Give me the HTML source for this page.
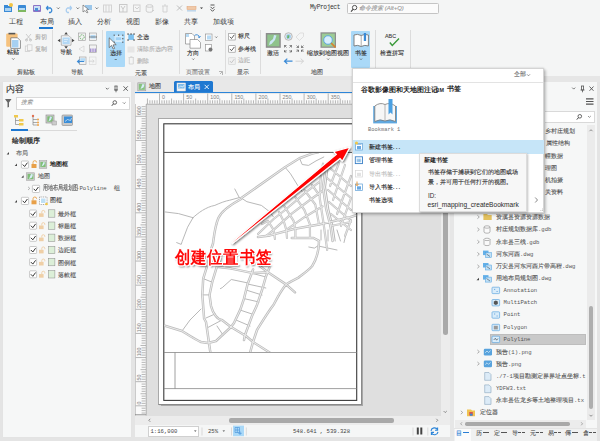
<!DOCTYPE html>
<html><head><meta charset="utf-8">
<style>
*{margin:0;padding:0;box-sizing:border-box}
html,body{width:600px;height:441px;overflow:hidden}
body{position:relative;background:#e4e4e4;font-family:"Liberation Sans",sans-serif;color:#333;font-size:7px;line-height:1}
.a{position:absolute}
.t{position:absolute;white-space:nowrap;line-height:1;-webkit-text-stroke:.12px currentColor}
.mono{font-family:"Liberation Mono",monospace;-webkit-text-stroke:0}
</style></head><body>
<div class="a" style="left:0;top:0;width:600px;height:76px;background:#f4f5f5"></div>
<div class="a" style="left:0;top:76px;width:600px;height:6px;background:#e6e6e6"></div>

<!-- ===== QAT ===== -->
<svg class="a" style="left:0;top:0" width="230" height="15" viewBox="0 0 230 15">
 <g>
  <rect x="4" y="6" width="8" height="6" fill="#3a8ad6"/><rect x="4" y="5" width="4" height="2" fill="#3a8ad6"/><rect x="5" y="8" width="6" height="3" fill="#a9d2f3"/><circle cx="11" cy="5" r="2" fill="#f2c444"/>
  <rect x="18" y="5" width="8" height="7" rx="1" fill="#3a8ad6"/><rect x="19" y="8" width="6" height="3" fill="#b6dbf5"/><rect x="18" y="10" width="8" height="2" fill="#7fb861"/>
  <rect x="33" y="5" width="8" height="7" rx="1" fill="#8d74c6"/><rect x="34" y="6" width="6" height="4" fill="#c9e0f5"/><rect x="35" y="8" width="3" height="3" fill="#4b8fd6"/>
  <path d="M48 6 L46.5 8 L48 10 M46.8 8 H50.5 A2.6 2.6 0 0 1 50.5 12.5 H49" fill="none" stroke="#3a8ad6" stroke-width="1.3"/>
  <path d="M57 7.5 L58.3 8.8 L59.6 7.5" fill="none" stroke="#555" stroke-width=".8"/>
  <path d="M70 6 L71.5 8 L70 10 M71.2 8 H67.5 A2.6 2.6 0 0 0 67.5 12.5 H69" fill="none" stroke="#a9cdef" stroke-width="1.3"/>
  <path d="M76.5 7.5 L77.8 8.8 L79.1 7.5" fill="none" stroke="#555" stroke-width=".8"/>
  <rect x="85" y="5" width="7" height="5" fill="#9cc7ea"/><path d="M83 5 L83 12 L85 10.5 L87 13 L88 12.3 L86.2 10 L88.5 9.5 Z" fill="#fff" stroke="#555" stroke-width=".6"/>
  <path d="M95.5 7.5 L96.8 8.8 L98.1 7.5" fill="none" stroke="#555" stroke-width=".8"/>
  <rect x="103.5" y="5" width="8" height="7" fill="none" stroke="#d3d3d3" stroke-width="1"/><path d="M106 5V12M109 5V12" stroke="#d3d3d3"/>
  <rect x="119.5" y="4.5" width="7.5" height="7.5" fill="none" stroke="#c9c9c9"/><path d="M121 6 L123 9 L125 6 M123 9 V12" stroke="#c9c9c9" fill="none"/>
  <rect x="133.5" y="5" width="6.5" height="6.5" fill="none" stroke="#d0d0d0"/><path d="M135 7 L137 9 L139 7" stroke="#d0d0d0" fill="none"/>
  <ellipse cx="149.5" cy="6" rx="3.3" ry="1.3" fill="none" stroke="#cfcfcf"/><path d="M146.2 6V11 A3.3 1.3 0 0 0 152.8 11 V6" fill="none" stroke="#cfcfcf"/><path d="M152 10 L153 11 L154 10" stroke="#cfcfcf" fill="none"/>
  <path d="M162 6H168M163 6V12H167V6M164 5H166" fill="none" stroke="#d3d3d3"/>
  <path d="M177 5.5 L182 10.5 M182 5.5 L177 10.5" stroke="#b5b5b5" stroke-width=".9"/>
  <rect x="187" y="6.5" width="9" height="3" fill="#f0c9a8" stroke="#e0a070" stroke-width=".5"/><rect x="187" y="10.5" width="9" height=".8" fill="#8ab8e0"/>
  <path d="M200 7.5 L201.5 9 L203 7.5Z" fill="#333"/>
  <path d="M210.5 5H214.5 M210.5 6.8 L212.5 8.8 L214.5 6.8 M210.5 9.3 L212.5 11.3 L214.5 9.3" fill="none" stroke="#444" stroke-width=".9"/>
 </g>
</svg>
<div class="t mono" style="left:310px;top:5px;font-size:6.3px;letter-spacing:-.45px;color:#333">MyProject</div>
<div class="a" style="left:347px;top:2.5px;width:92px;height:11.5px;border:1px solid #c4c4c4;border-radius:1.5px;background:#fbfbfb"></div>
<svg class="a" style="left:350px;top:4px" width="8" height="9" viewBox="0 0 8 9"><circle cx="4.6" cy="3.6" r="2.2" fill="none" stroke="#444" stroke-width=".9"/><path d="M3 5.3 L1 7.6" stroke="#444" stroke-width="1.1"/></svg>
<div class="t" style="left:359px;top:4.5px;font-size:6px;color:#999;font-style:italic">命令搜索 (Alt+Q)</div>

<!-- ===== TABS ===== -->
<div class="t" style="left:9px;top:18.5px;font-size:6.6px;color:#3a3a3a;-webkit-text-stroke:0">工程</div>
<div class="t" style="left:39.5px;top:18.5px;font-size:6.6px;color:#3a3a3a;-webkit-text-stroke:0">布局</div>
<div class="a" style="left:39px;top:27px;width:14px;height:1.6px;background:#1f78d1"></div>
<div class="t" style="left:68px;top:18.5px;font-size:6.6px;color:#3a3a3a;-webkit-text-stroke:0">插入</div>
<div class="t" style="left:97px;top:18.5px;font-size:6.6px;color:#3a3a3a;-webkit-text-stroke:0">分析</div>
<div class="t" style="left:126px;top:18.5px;font-size:6.6px;color:#3a3a3a;-webkit-text-stroke:0">视图</div>
<div class="t" style="left:155px;top:18.5px;font-size:6.6px;color:#3a3a3a;-webkit-text-stroke:0">影像</div>
<div class="t" style="left:184px;top:18.5px;font-size:6.6px;color:#3a3a3a;-webkit-text-stroke:0">共享</div>
<div class="t" style="left:213px;top:18.5px;font-size:6.6px;color:#3a3a3a;-webkit-text-stroke:0">加载项</div>

<!-- ===== RIBBON ===== -->
<div class="a" style="left:52px;top:30px;width:1px;height:44px;background:#dcdcdc"></div>
<div class="a" style="left:102px;top:30px;width:1px;height:44px;background:#dcdcdc"></div>
<div class="a" style="left:179px;top:30px;width:1px;height:44px;background:#dcdcdc"></div>
<div class="a" style="left:224.5px;top:30px;width:1px;height:44px;background:#dcdcdc"></div>
<div class="a" style="left:259.5px;top:30px;width:1px;height:44px;background:#dcdcdc"></div>
<div class="a" style="left:374.5px;top:30px;width:1px;height:44px;background:#dcdcdc"></div>
<div class="a" style="left:409.5px;top:30px;width:1px;height:44px;background:#dcdcdc"></div>
<!-- highlighted buttons -->
<div class="a" style="left:106px;top:30.8px;width:19px;height:36.5px;background:#aad9f8;border-radius:1px"></div>
<div class="a" style="left:351.3px;top:30.8px;width:19.2px;height:37px;background:#aad9f8;border-radius:1px"></div>

<svg class="a" style="left:0;top:28px" width="420" height="50" viewBox="0 28 420 50">
 <!-- paste -->
 <rect x="6.2" y="33.5" width="11.4" height="13.2" rx="1" fill="#f6c27e"/>
 <rect x="8.5" y="32.8" width="6.8" height="1.6" fill="#555"/>
 <path d="M10.8 37.8 H17.5 L20.4 40.7 V48.4 H10.8 Z" fill="#fff" stroke="#666" stroke-width=".7"/>
 <rect x="12" y="40" width="6.5" height="7.5" fill="#a6d0f2"/>
 <path d="M12.2 58.4 L13.3 59.5 L14.4 58.4" fill="none" stroke="#444" stroke-width=".7"/>
 <!-- scissors -->
 <path d="M26 34 L31 40 M31 34 L26 40" stroke="#c4c4c4" stroke-width=".8"/><circle cx="26.5" cy="40" r="1" fill="none" stroke="#c4c4c4"/><circle cx="30.5" cy="40" r="1" fill="none" stroke="#c4c4c4"/>
 <!-- copy -->
 <rect x="25.3" y="46" width="4.5" height="5.5" fill="none" stroke="#cfcfcf" stroke-width=".8"/><rect x="27.5" y="44.8" width="4.5" height="5.8" fill="#f5f5f5" stroke="#cfcfcf" stroke-width=".8"/>
 <!-- navigate -->
 <path d="M61.3 35.8 H69 L71 37.8 V45.2 H61.3Z" fill="#fff" stroke="#8a8a8a" stroke-width=".6"/>
 <rect x="62.4" y="37.4" width="7.4" height="6.8" fill="#b4d8f4"/>
 <path d="M64 39.5 H68 M64 41.5 H67" stroke="#fff" stroke-width=".5"/>
 <path d="M66.1 32 L64.3 34.6 H67.9Z M66.1 48.8 L64.3 46.2 H67.9Z M57.6 40.5 L60.3 38.7 V42.3Z M74.6 40.5 L71.9 38.7 V42.3Z" fill="#4a4a4a"/>
 <!-- nav small icons -->
 <rect x="78.5" y="33" width="7" height="7.5" fill="#f2f2f2" stroke="#999" stroke-width=".6"/><circle cx="82" cy="37" r="2.2" fill="none" stroke="#5aa95a" stroke-width=".9" stroke-dasharray="1.2 .8"/>
 <rect x="89.5" y="33" width="7" height="7.5" fill="#f2f2f2" stroke="#999" stroke-width=".6"/><rect x="90.5" y="35" width="5" height="3.5" fill="#b7dbf5"/><path d="M89 37H97" stroke="#444" stroke-width=".6"/>
 <path d="M79 49 L84 46 V52Z" fill="none" stroke="#d3d3d3" stroke-width=".7"/>
 <rect x="89.5" y="45" width="7" height="7.5" fill="#f2f2f2" stroke="#999" stroke-width=".6"/><path d="M90.8 48.5V52M93 48.5V52M95.2 48.5V52" stroke="#7a5cc0" stroke-width=".9"/>
 <rect x="79.5" y="57" width="6.5" height="7.5" fill="#f2f2f2" stroke="#999" stroke-width=".6"/><rect x="80.3" y="58.2" width="5" height="3.5" fill="#b7dbf5"/><path d="M77.5 61.5H84 M79.5 59.6 L77.5 61.5 L79.5 63.4" fill="none" stroke="#3a8ad6" stroke-width="1.1"/>
 <rect x="89.5" y="57" width="6.5" height="7.5" fill="none" stroke="#d6d6d6" stroke-width=".6"/><path d="M88.5 61.2H94 M92.5 59.6 L94.2 61.2 L92.5 62.8" fill="none" stroke="#d0d0d0" stroke-width=".8"/>
 <!-- select -->
 <rect x="114.5" y="35.5" width="8" height="6.5" fill="#d5ecfb"/>
 <rect x="115.8" y="37.3" width="5.4" height="2.8" fill="#9fd0f3"/>
 <g fill="#555"><rect x="113.6" y="34.6" width="1.2" height="1.2"/><rect x="118" y="34.6" width="1.2" height="1.2"/><rect x="122.2" y="34.6" width="1.2" height="1.2"/><rect x="113.6" y="41.6" width="1.2" height="1.2"/><rect x="122.2" y="41.6" width="1.2" height="1.2"/><rect x="122.2" y="38.1" width="1.2" height="1.2"/></g>
 <path d="M109.2 37.8 V47.6 L111.5 45.4 L113.2 49 L114.6 48.4 L113 44.9 L116.2 44.7 Z" fill="#fff" stroke="#4a4a4a" stroke-width=".65" stroke-linejoin="round"/>
 <path d="M114.7 59 L115.7 60 L116.7 59" fill="none" stroke="#444" stroke-width=".7"/>
 <!-- select all -->
 <rect x="128.3" y="34.3" width="5.6" height="5.6" fill="#7cc0ee"/><g fill="#444"><rect x="127.4" y="33.4" width="1.3" height="1.3"/><rect x="133.4" y="33.4" width="1.3" height="1.3"/><rect x="127.4" y="39.4" width="1.3" height="1.3"/><rect x="133.4" y="39.4" width="1.3" height="1.3"/><rect x="130.4" y="33.4" width="1.3" height="1.3"/></g>
 <rect x="127.5" y="46.5" width="7" height="6" fill="#e6e6e6"/>
 <path d="M128.5 57.5H134 M129.3 58V64H133.3V58 M130.3 56.7H132.3" fill="none" stroke="#cfcfcf" stroke-width=".8"/>
 <!-- orientation -->
 <path d="M185.5 33.5 H192 L194.5 36 V44 H185.5Z" fill="#fff" stroke="#777" stroke-width=".6"/><rect x="186" y="34" width="3" height="3" fill="#b7dbf5"/>
 <path d="M190 39.5 H197.5 L200.5 42.5 V48.2 H190Z" fill="#fff" stroke="#777" stroke-width=".6"/>
 <path d="M194.5 35.5 A3 3 0 0 1 199.5 37.5 M199.5 37.5 L200.5 36 M199.5 37.5 L198 37" fill="none" stroke="#3a8ad6" stroke-width=".9"/>
 <path d="M192.3 58.6 L193.3 59.6 L194.3 58.6" fill="none" stroke="#444" stroke-width=".7"/>
 <rect x="205.5" y="34" width="6.5" height="6.5" fill="#fff" stroke="#888" stroke-width=".6"/><rect x="207" y="35.5" width="4" height="4" fill="#b7dbf5"/><path d="M215.3 36.6 L216.3 37.6 L217.3 36.6" fill="none" stroke="#444" stroke-width=".7"/>
 <rect x="205.5" y="44.5" width="6" height="6.5" fill="#fff" stroke="#888" stroke-width=".6"/><circle cx="210.5" cy="49.5" r="2" fill="#777"/>
 <path d="M219 71.5 H222.5 V75 M220 74 L222 72" fill="none" stroke="#888" stroke-width=".6"/>
 <!-- checkboxes -->
 <rect x="228.7" y="33.5" width="6.5" height="6.5" fill="#fff" stroke="#8a8a8a" stroke-width=".6"/><path d="M229.8 36.7 L231.5 38.5 L234.3 34.8" fill="none" stroke="#333" stroke-width=".8"/>
 <rect x="228.7" y="45.7" width="6.5" height="6.5" fill="#fff" stroke="#8a8a8a" stroke-width=".6"/><path d="M229.8 48.9 L231.5 50.7 L234.3 47" fill="none" stroke="#333" stroke-width=".8"/>
 <rect x="228.7" y="57.8" width="6.5" height="6.5" fill="#f0f0f0" stroke="#d0d0d0" stroke-width=".6"/><path d="M229.8 61 L231.5 62.8 L234.3 59.1" fill="none" stroke="#bbb" stroke-width=".8"/>
 <!-- activate -->
 <rect x="265.8" y="33" width="15" height="14.8" fill="#8d8d8d"/><rect x="267.3" y="34.5" width="12" height="11.8" fill="#8fc38c"/>
 <path d="M274 35 L276.5 35.5 L275 40 L271.5 44 L269 45 L270 41.5 L273 39Z" fill="#cde7f7"/>
 <!-- globe etc -->
 <circle cx="288.5" cy="36.5" r="3.8" fill="#e8e8e8" stroke="#999" stroke-width=".6"/><circle cx="288.5" cy="36.5" r="2.5" fill="#a8d2f2"/><path d="M287.5 35 L289.5 35.5 L289 38 L287 38.5Z" fill="#6cb36a"/>
 <path d="M296 37 L300 33 L303.5 33 L303.5 36.5 L299.5 40.5Z" fill="none" stroke="#d6d6d6" stroke-width=".7"/>
 <g stroke="#444" stroke-width=".6" fill="none">
  <path d="M284.5 45.5 L286.5 47.5 M284.5 47.5 V45.5 H286.5"/><path d="M291.5 45.5 L289.5 47.5 M291.5 47.5 V45.5 H289.5"/>
  <path d="M284.5 52 L286.5 50 M284.5 50 V52 H286.5"/><path d="M291.5 52 L289.5 50 M291.5 50 V52 H289.5"/>
  <path d="M296.5 45.5 L298.5 47.5 M298.5 45.5 V47.5 H296.5"/><path d="M303.5 45.5 L301.5 47.5 M301.5 45.5 V47.5 H303.5"/>
  <path d="M296.5 52 L298.5 50 M298.5 52 V50 H296.5"/><path d="M303.5 52 L301.5 50 M301.5 52 V50 H303.5"/>
 </g>
 <path d="M284.5 61.2 H292.5 M287.3 58.6 L284.5 61.2 L287.3 63.8" fill="none" stroke="#3a8ad6" stroke-width="1.2"/>
 <path d="M295.5 61.2 H303.5 M300.7 58.6 L303.5 61.2 L300.7 63.8" fill="none" stroke="#d3d3d3" stroke-width="1"/>
 <!-- zoom to map view -->
 <rect x="320.5" y="32.3" width="15.5" height="15.5" fill="#8d8d8d"/><rect x="321.8" y="33.6" width="13" height="13" fill="#9ccc96"/>
 <circle cx="328" cy="40" r="4.3" fill="#d8eefc" stroke="#5fa8e2" stroke-width="1"/><path d="M331.2 43.2 L335.5 47.3" stroke="#d8822e" stroke-width="1.6"/>
 <path d="M327.2 58.6 L328.2 59.6 L329.2 58.6" fill="none" stroke="#444" stroke-width=".7"/>
 <!-- bookmarks -->
 <path d="M354 35 Q357.5 33.5 361.2 35.5 Q364.9 33.5 368.4 35 V46 Q364.9 44.5 361.2 46.5 Q357.5 44.5 354 46 Z" fill="#fff" stroke="#777" stroke-width=".9"/>
 <path d="M361.2 35.5 V46.5" stroke="#777" stroke-width=".6"/>
 <rect x="363.8" y="33" width="2.3" height="8" fill="#3a8ad6"/>
 <path d="M360 58.6 L361 59.6 L362 58.6" fill="none" stroke="#444" stroke-width=".7"/>
 <!-- spell check -->
 <path d="M389.8 42.5 L392.3 45.5 L399 38.6" fill="none" stroke="#3a9a3a" stroke-width="1.4"/>
</svg>
<div class="t" style="left:385px;top:33.6px;font-size:5.4px;color:#444">ABC</div>

<!-- ribbon labels -->
<div class="t" style="left:6.8px;top:49.3px;font-size:6.3px;color:#333">粘贴</div>
<div class="t" style="left:34.6px;top:33.5px;font-size:6.2px;color:#a8a8a8">剪切</div>
<div class="t" style="left:34.6px;top:45.5px;font-size:6.2px;color:#a8a8a8">复制</div>
<div class="t" style="left:17px;top:69.5px;font-size:5.8px;color:#555">剪贴板</div>

<div class="t" style="left:60px;top:49.3px;font-size:6.3px;color:#333">导航</div>
<div class="t" style="left:70.7px;top:69.5px;font-size:5.9px;color:#555">导航</div>

<div class="t" style="left:110px;top:50.2px;font-size:6px;color:#333">选择</div>
<div class="t" style="left:137.3px;top:33.8px;font-size:6.1px;color:#333">全选</div>
<div class="t" style="left:137.3px;top:46.2px;font-size:6.1px;color:#b0b0b0">清除所选内容</div>
<div class="t" style="left:137.3px;top:57.6px;font-size:6.1px;color:#b0b0b0">删除</div>
<div class="t" style="left:134.7px;top:69.8px;font-size:6px;color:#555">元素</div>

<div class="t" style="left:187.2px;top:50px;font-size:6.4px;color:#333">方向</div>
<div class="t" style="left:185.8px;top:70px;font-size:5.9px;color:#888">页面设置</div>

<div class="t" style="left:237.5px;top:33.8px;font-size:5.8px;color:#333">标尺</div>
<div class="t" style="left:237.5px;top:46px;font-size:6.2px;color:#333">参考线</div>
<div class="t" style="left:237.5px;top:58px;font-size:5.8px;color:#b0b0b0">边距</div>
<div class="t" style="left:236.8px;top:70px;font-size:5.7px;color:#555">显示</div>

<div class="t" style="left:266.5px;top:49.6px;font-size:6.4px;color:#333">激活</div>
<div class="t" style="left:306.9px;top:49.6px;font-size:6.2px;color:#333">缩放到地图视图</div>
<div class="t" style="left:311px;top:70px;font-size:5.8px;color:#555">地图</div>

<div class="t" style="left:354.9px;top:49.6px;font-size:6.2px;color:#333">书签</div>
<div class="t" style="left:380.4px;top:49.6px;font-size:6.1px;color:#333">检查拼写</div>

<!-- ===== LEFT PANE ===== -->
<div class="a" style="left:3px;top:81.5px;width:128px;height:355.3px;background:#f6f7f7;box-shadow:0 0 0 .5px #e2e2e2"></div>
<div class="t" style="left:5.8px;top:84.6px;font-size:8.6px;color:#333">内容</div>
<svg class="a" style="left:100px;top:84px" width="32" height="10" viewBox="100 84 32 10">
 <path d="M105.8 87.8 L107.3 89.3 L108.8 87.8" fill="none" stroke="#555" stroke-width=".8"/>
 <path d="M114.5 86 H117.5 M115 86 V90 H117 V86 M114 90 H118 M116 90 V92.3" fill="none" stroke="#555" stroke-width=".8"/>
 <path d="M123.5 86.3 L127.8 90.8 M127.8 86.3 L123.5 90.8" stroke="#555" stroke-width=".9"/>
</svg>
<svg class="a" style="left:4px;top:97px" width="9" height="12" viewBox="4 97 9 12"><path d="M5 99 H11.5 L9 102.5 V107 L7.5 107.5 V102.5 Z" fill="#666"/></svg>
<div class="a" style="left:16px;top:97.4px;width:113.5px;height:12.3px;background:#fff;border:1px solid #d9d9d9"></div>
<div class="t" style="left:20.5px;top:100.3px;font-size:5.6px;color:#999;font-style:italic">搜索</div>
<svg class="a" style="left:110px;top:99px" width="20" height="9" viewBox="110 99 20 9"><circle cx="114.8" cy="102.5" r="1.8" fill="none" stroke="#444" stroke-width=".8"/><path d="M113.6 103.7 L111.8 105.8" stroke="#444" stroke-width="1"/><path d="M122.8 102.3 L124.2 103.7 L125.6 102.3" fill="none" stroke="#666" stroke-width=".7"/></svg>
<!-- pane tab icons -->
<svg class="a" style="left:10px;top:112px" width="70" height="20" viewBox="10 112 70 20">
 <rect x="14" y="115" width="4" height="2.5" fill="#f0c94c"/><rect x="19" y="119" width="4.5" height="2.5" fill="#f0c94c"/><rect x="19" y="123" width="4.5" height="2.5" fill="#f0c94c"/>
 <path d="M15.5 117.5 V124.5 H19 M15.5 120.5 H19" fill="none" stroke="#777" stroke-width=".6"/>
 <circle cx="33" cy="116" r="1.2" fill="#e07050"/><circle cx="38" cy="119.5" r="1" fill="#f0a040"/><circle cx="38" cy="122.5" r="1" fill="#f0a040"/><circle cx="38" cy="125" r="1" fill="#f0a040"/>
 <path d="M33 117 V125 H37 M33 119.5 H37 M33 122.5 H37" fill="none" stroke="#777" stroke-width=".6"/>
 <rect x="46" y="115" width="8" height="8" fill="#d0d0d0" stroke="#888" stroke-width=".6"/><rect x="47.3" y="116.3" width="5.5" height="5.5" fill="#7dba74"/><path d="M50 116.5 L52 117 L51 120 L48.5 121.5Z" fill="#cfe8f8"/><rect x="52" y="121" width="4.5" height="4" fill="#ccc" stroke="#999" stroke-width=".5"/>
 <rect x="62" y="115" width="10.5" height="10.5" rx="1" fill="#c9c9c9" stroke="#888" stroke-width=".6"/><rect x="64" y="116.5" width="8" height="6.5" fill="#3b8ed8"/><path d="M65 121.5 L67.5 119.5 L70.5 120.5 L71.5 118" stroke="#fff" stroke-width=".6" fill="none"/>
</svg>
<div class="a" style="left:11px;top:129.8px;width:66px;height:1.3px;background:#dadada"></div>
<div class="a" style="left:11px;top:129px;width:17px;height:1.6px;background:#1f78d1"></div>
<div class="t" style="left:11.8px;top:137px;font-size:7.3px;color:#333;-webkit-text-stroke:.3px #333">绘制顺序</div>
<!-- tree -->
<svg class="a" style="left:0;top:145px" width="135" height="140" viewBox="0 145 135 140">
 <g fill="#444">
  <path d="M6.6 154.5 L9 152 V154.5Z"/>
  <path d="M14.7 166 L17 163.5 V166Z"/>
  <path d="M21.3 177.8 L23.6 175.3 V177.8Z"/>
  <path d="M14.7 202.6 L17 200.1 V202.6Z"/>
 </g>
 <path d="M28 186.8 L29.8 188.4 L28 190" fill="none" stroke="#888" stroke-width=".6"/>
 <g fill="#fff" stroke="#a8a8a8" stroke-width=".6">
  <rect x="21.4" y="161" width="7.2" height="7.2" rx=".8"/>
  <rect x="32.4" y="185.3" width="7.2" height="7.2" rx=".8"/>
  <rect x="21.4" y="197.3" width="7.2" height="7.2" rx=".8"/>
  <rect x="29.6" y="210" width="7" height="7" rx=".8"/>
  <rect x="29.6" y="222.2" width="7" height="7" rx=".8"/>
  <rect x="29.6" y="234.3" width="7" height="7" rx=".8"/>
  <rect x="29.6" y="246.5" width="7" height="7" rx=".8"/>
  <rect x="29.6" y="258.6" width="7" height="7" rx=".8"/>
  <rect x="29.6" y="270.8" width="7" height="7" rx=".8"/>
 </g>
 <g fill="none" stroke="#2a2a2a" stroke-width=".95">
  <path d="M22.7 164.5 L24.6 166.5 L27.4 162.7"/>
  <path d="M33.7 188.8 L35.6 190.8 L38.4 187"/>
  <path d="M22.7 200.8 L24.6 202.8 L27.4 199"/>
  <path d="M30.9 213.5 L32.8 215.5 L35.6 211.7"/>
  <path d="M30.9 225.7 L32.8 227.7 L35.6 223.9"/>
  <path d="M30.9 237.8 L32.8 239.8 L35.6 236"/>
  <path d="M30.9 250 L32.8 252 L35.6 248.2"/>
  <path d="M30.9 262.1 L32.8 264.1 L35.6 260.3"/>
  <path d="M30.9 274.3 L32.8 276.3 L35.6 272.5"/>
 </g>
 <!-- locks strong -->
 <g>
  <rect x="31.5" y="164" width="5" height="4" fill="#e8a048"/><path d="M33 164 V162.5 A1.8 1.8 0 0 1 36.6 162.5" fill="none" stroke="#e8a048" stroke-width=".9"/>
  <rect x="31.5" y="200.3" width="5" height="4" fill="#e8a048"/><path d="M33 200.3 V198.8 A1.8 1.8 0 0 1 36.6 198.8" fill="none" stroke="#e8a048" stroke-width=".9"/>
 </g>
 <g><rect x="39" y="213.3" width="4.6" height="3.6" fill="#efcfa6"/><path d="M41.8 213.3 V211.9 A1.5 1.5 0 0 1 44.8 211.9 V212.7" fill="none" stroke="#efcfa6" stroke-width=".9"/><rect x="39" y="225.5" width="4.6" height="3.6" fill="#efcfa6"/><path d="M41.8 225.5 V224.1 A1.5 1.5 0 0 1 44.8 224.1 V224.9" fill="none" stroke="#efcfa6" stroke-width=".9"/><rect x="39" y="237.6" width="4.6" height="3.6" fill="#efcfa6"/><path d="M41.8 237.6 V236.2 A1.5 1.5 0 0 1 44.8 236.2 V237.0" fill="none" stroke="#efcfa6" stroke-width=".9"/><rect x="39" y="249.8" width="4.6" height="3.6" fill="#efcfa6"/><path d="M41.8 249.8 V248.4 A1.5 1.5 0 0 1 44.8 248.4 V249.2" fill="none" stroke="#efcfa6" stroke-width=".9"/><rect x="39" y="261.9" width="4.6" height="3.6" fill="#efcfa6"/><path d="M41.8 261.9 V260.5 A1.5 1.5 0 0 1 44.8 260.5 V261.3" fill="none" stroke="#efcfa6" stroke-width=".9"/><rect x="39" y="274.1" width="4.6" height="3.6" fill="#efcfa6"/><path d="M41.8 274.1 V272.7 A1.5 1.5 0 0 1 44.8 272.7 V273.5" fill="none" stroke="#efcfa6" stroke-width=".9"/></g>
 <!-- map frame icon -->
 <rect x="39.2" y="160.7" width="7.6" height="7.6" fill="#cfcfcf" stroke="#999" stroke-width=".5"/><rect x="40.4" y="161.9" width="5.2" height="5.2" fill="#80bf78"/><path d="M43.5 162 L45 162.5 L44 165 L41.5 166.5Z" fill="#d8eefa"/>
 <rect x="26.5" y="172.8" width="8" height="7.5" fill="#cfcfcf" stroke="#999" stroke-width=".5"/><rect x="27.6" y="173.9" width="5.8" height="5.3" fill="#80bf78"/><path d="M31 174 L33 174.6 L32 177.5 L29 179Z" fill="#d8eefa"/>
 <!-- graticule icon -->
 <rect x="39.5" y="197" width="7.5" height="7.5" fill="#fff" stroke="#555" stroke-width=".5" stroke-dasharray="1 .8"/><rect x="41" y="198.5" width="4.5" height="4.5" fill="#bfe0f5"/><circle cx="46.5" cy="204" r="1.3" fill="#f2c744"/>
 <g fill="#dcefd8" stroke="#8a8a8a" stroke-width=".5">
  <rect x="48.3" y="209.8" width="6.6" height="7.4"/><rect x="48.3" y="222" width="6.6" height="7.4"/><rect x="48.3" y="234.1" width="6.6" height="7.4"/>
  <rect x="48.3" y="246.3" width="6.6" height="7.4"/><rect x="48.3" y="258.4" width="6.6" height="7.4"/><rect x="48.3" y="270.6" width="6.6" height="7.4"/>
 </g>
</svg>
<div class="t" style="left:15.5px;top:149.8px;font-size:6.3px;color:#666">布局</div>
<div class="t" style="left:50px;top:160.8px;font-size:6.4px;color:#222;font-weight:bold;-webkit-text-stroke:0">地图框</div>
<div class="t" style="left:37.6px;top:172.8px;font-size:6.2px;color:#555">地图</div>
<div class="t" style="left:43px;top:184.8px;font-size:6.6px;color:#555;transform:scaleX(.72);transform-origin:0 0">用地布局规划图</div><div class="t mono" style="left:76px;top:185.6px;font-size:5.7px;color:#555">-Polyline</div><div class="t" style="left:113.5px;top:185px;font-size:6.3px;color:#555">组</div>
<div class="t" style="left:50px;top:197.2px;font-size:6.2px;color:#444">图框</div>
<div class="t" style="left:57.8px;top:210.9px;font-size:6.3px;color:#555">最外框</div>
<div class="t" style="left:57.8px;top:223.1px;font-size:6.3px;color:#555">标题框</div>
<div class="t" style="left:57.8px;top:235.2px;font-size:6.3px;color:#555">数据框</div>
<div class="t" style="left:57.8px;top:247.4px;font-size:6.3px;color:#555">边距框</div>
<div class="t" style="left:57.8px;top:259.5px;font-size:6.3px;color:#555">图例框</div>
<div class="t" style="left:57.8px;top:271.7px;font-size:6.3px;color:#555">落款框</div>

<!-- ===== MAP VIEW ===== -->
<div class="a" style="left:135px;top:80px;width:315px;height:357px;background:#e8e8e8"></div>
<!-- tabs -->
<svg class="a" style="left:137px;top:82px" width="10" height="10" viewBox="137 82 10 10"><rect x="137.8" y="82.8" width="8" height="8" fill="#cfcfcf" stroke="#999" stroke-width=".5"/><rect x="138.8" y="83.8" width="6" height="6" fill="#86c27d"/><path d="M142.5 84 L144.5 84.6 L143.5 87.5 L140.5 89Z" fill="#d8eefa"/></svg>
<div class="t" style="left:149px;top:83.4px;font-size:6.4px;color:#444">地图</div>
<div class="a" style="left:174px;top:81px;width:39px;height:12px;background:#1f78d1;border-radius:1.5px 1.5px 0 0"></div>
<svg class="a" style="left:176px;top:82px" width="11" height="10" viewBox="176 82 11 10"><rect x="177" y="83" width="8.5" height="8" fill="#f3f3f3" stroke="#ddd" stroke-width=".5"/><rect x="178" y="84" width="6.5" height="4.5" fill="#7fbcea"/><path d="M178.5 88 L180.5 86 L183 87 L184 85" stroke="#fff" stroke-width=".6" fill="none"/></svg>
<div class="t" style="left:188px;top:83.6px;font-size:6.3px;color:#fff">布局</div>
<svg class="a" style="left:203px;top:83px" width="8" height="8" viewBox="203 83 8 8"><path d="M204.6 84.8 L208.8 89 M208.8 84.8 L204.6 89" stroke="#fff" stroke-width=".9"/></svg>
<div class="a" style="left:135px;top:92.2px;width:315px;height:1.3px;background:#2d85d8"></div>
<!-- ruler -->
<div class="a" style="left:135px;top:93.5px;width:306px;height:10.7px;background:#fafafa"></div>
<div class="a" style="left:135px;top:104px;width:11px;height:311.5px;background:#fafafa"></div>
<div class="a" style="left:146px;top:104px;width:295px;height:311.5px;background:#dfdfdf"></div>
<svg class="a" style="left:135px;top:93px" width="306" height="323" viewBox="135 93 306 323">
 <g stroke="#8a8a8a" stroke-width=".6" fill="none"><path d="M147.45 98.5V104 M149.86 100.3V103.6 M152.27 100.3V103.6 M154.68 100.3V103.6 M157.09 100.3V103.6 M159.50 93.5V104 M161.91 100.3V103.6 M164.32 100.3V103.6 M166.73 100.3V103.6 M169.14 100.3V103.6 M171.55 98.5V104 M173.96 100.3V103.6 M176.37 100.3V103.6 M178.78 100.3V103.6 M181.19 100.3V103.6 M183.60 93.5V104 M186.01 100.3V103.6 M188.42 100.3V103.6 M190.83 100.3V103.6 M193.24 100.3V103.6 M195.65 98.5V104 M198.06 100.3V103.6 M200.47 100.3V103.6 M202.88 100.3V103.6 M205.29 100.3V103.6 M207.70 93.5V104 M210.11 100.3V103.6 M212.52 100.3V103.6 M214.93 100.3V103.6 M217.34 100.3V103.6 M219.75 98.5V104 M222.16 100.3V103.6 M224.57 100.3V103.6 M226.98 100.3V103.6 M229.39 100.3V103.6 M231.80 93.5V104 M234.21 100.3V103.6 M236.62 100.3V103.6 M239.03 100.3V103.6 M241.44 100.3V103.6 M243.85 98.5V104 M246.26 100.3V103.6 M248.67 100.3V103.6 M251.08 100.3V103.6 M253.49 100.3V103.6 M255.90 93.5V104 M258.31 100.3V103.6 M260.72 100.3V103.6 M263.13 100.3V103.6 M265.54 100.3V103.6 M267.95 98.5V104 M270.36 100.3V103.6 M272.77 100.3V103.6 M275.18 100.3V103.6 M277.59 100.3V103.6 M280.00 93.5V104 M282.41 100.3V103.6 M284.82 100.3V103.6 M287.23 100.3V103.6 M289.64 100.3V103.6 M292.05 98.5V104 M294.46 100.3V103.6 M296.87 100.3V103.6 M299.28 100.3V103.6 M301.69 100.3V103.6 M304.10 93.5V104 M306.51 100.3V103.6 M308.92 100.3V103.6 M311.33 100.3V103.6 M313.74 100.3V103.6 M316.15 98.5V104 M318.56 100.3V103.6 M320.97 100.3V103.6 M323.38 100.3V103.6 M325.79 100.3V103.6 M328.20 93.5V104 M330.61 100.3V103.6 M333.02 100.3V103.6 M335.43 100.3V103.6 M337.84 100.3V103.6 M340.25 98.5V104 M342.66 100.3V103.6 M345.07 100.3V103.6 M347.48 100.3V103.6 M349.89 100.3V103.6 M352.30 93.5V104 M354.71 100.3V103.6 M357.12 100.3V103.6 M359.53 100.3V103.6 M361.94 100.3V103.6 M364.35 98.5V104 M366.76 100.3V103.6 M369.17 100.3V103.6 M371.58 100.3V103.6 M373.99 100.3V103.6 M376.40 93.5V104 M378.81 100.3V103.6 M381.22 100.3V103.6 M383.63 100.3V103.6 M386.04 100.3V103.6 M388.45 98.5V104 M390.86 100.3V103.6 M393.27 100.3V103.6 M395.68 100.3V103.6 M398.09 100.3V103.6 M400.50 93.5V104 M402.91 100.3V103.6 M405.32 100.3V103.6 M407.73 100.3V103.6 M410.14 100.3V103.6 M412.55 98.5V104 M414.96 100.3V103.6 M417.37 100.3V103.6 M419.78 100.3V103.6 M422.19 100.3V103.6 M424.60 93.5V104 M427.01 100.3V103.6 M429.42 100.3V103.6 M431.83 100.3V103.6 M434.24 100.3V103.6 M436.65 98.5V104 M439.06 100.3V103.6 M141.6 413.04H145.6 M141.6 410.62H145.6 M141.6 408.21H145.6 M135.5 405.80H146 M141.6 403.39H145.6 M141.6 400.98H145.6 M141.6 398.56H145.6 M141.6 396.15H145.6 M140.5 393.74H146 M141.6 391.32H145.6 M141.6 388.91H145.6 M141.6 386.50H145.6 M141.6 384.09H145.6 M135.5 381.68H146 M141.6 379.26H145.6 M141.6 376.85H145.6 M141.6 374.44H145.6 M141.6 372.03H145.6 M140.5 369.61H146 M141.6 367.20H145.6 M141.6 364.79H145.6 M141.6 362.38H145.6 M141.6 359.96H145.6 M135.5 357.55H146 M141.6 355.14H145.6 M141.6 352.73H145.6 M141.6 350.31H145.6 M141.6 347.90H145.6 M140.5 345.49H146 M141.6 343.07H145.6 M141.6 340.66H145.6 M141.6 338.25H145.6 M141.6 335.84H145.6 M135.5 333.43H146 M141.6 331.01H145.6 M141.6 328.60H145.6 M141.6 326.19H145.6 M141.6 323.78H145.6 M140.5 321.36H146 M141.6 318.95H145.6 M141.6 316.54H145.6 M141.6 314.12H145.6 M141.6 311.71H145.6 M135.5 309.30H146 M141.6 306.89H145.6 M141.6 304.48H145.6 M141.6 302.06H145.6 M141.6 299.65H145.6 M140.5 297.24H146 M141.6 294.83H145.6 M141.6 292.41H145.6 M141.6 290.00H145.6 M141.6 287.59H145.6 M135.5 285.18H146 M141.6 282.76H145.6 M141.6 280.35H145.6 M141.6 277.94H145.6 M141.6 275.52H145.6 M140.5 273.11H146 M141.6 270.70H145.6 M141.6 268.29H145.6 M141.6 265.88H145.6 M141.6 263.46H145.6 M135.5 261.05H146 M141.6 258.64H145.6 M141.6 256.23H145.6 M141.6 253.81H145.6 M141.6 251.40H145.6 M140.5 248.99H146 M141.6 246.58H145.6 M141.6 244.16H145.6 M141.6 241.75H145.6 M141.6 239.34H145.6 M135.5 236.93H146 M141.6 234.51H145.6 M141.6 232.10H145.6 M141.6 229.69H145.6 M141.6 227.28H145.6 M140.5 224.86H146 M141.6 222.45H145.6 M141.6 220.04H145.6 M141.6 217.63H145.6 M141.6 215.21H145.6 M135.5 212.80H146 M141.6 210.39H145.6 M141.6 207.98H145.6 M141.6 205.56H145.6 M141.6 203.15H145.6 M140.5 200.74H146 M141.6 198.33H145.6 M141.6 195.91H145.6 M141.6 193.50H145.6 M141.6 191.09H145.6 M135.5 188.68H146 M141.6 186.26H145.6 M141.6 183.85H145.6 M141.6 181.44H145.6 M141.6 179.03H145.6 M140.5 176.61H146 M141.6 174.20H145.6 M141.6 171.79H145.6 M141.6 169.38H145.6 M141.6 166.96H145.6 M135.5 164.55H146 M141.6 162.14H145.6 M141.6 159.73H145.6 M141.6 157.31H145.6 M141.6 154.90H145.6 M140.5 152.49H146 M141.6 150.08H145.6 M141.6 147.66H145.6 M141.6 145.25H145.6 M141.6 142.84H145.6 M135.5 140.43H146 M141.6 138.01H145.6 M141.6 135.60H145.6 M141.6 133.19H145.6 M141.6 130.78H145.6 M140.5 128.36H146 M141.6 125.95H145.6 M141.6 123.54H145.6 M141.6 121.12H145.6 M141.6 118.71H145.6 M135.5 116.30H146 M141.6 113.89H145.6 M141.6 111.48H145.6 M141.6 109.06H145.6 M141.6 106.65H145.6"/></g>
 <path d="M146 104.2H441 M146.2 104.2V415.5" stroke="#9c9c9c" stroke-width=".7"/>
 <path d="M135.5 104V415.5" stroke="#b4b4b4" stroke-width=".7"/>
 <path d="M135 414.8H146" stroke="#777" stroke-width=".8"/>
 <g font-family="Liberation Sans" font-size="5.3" fill="#808080"><text x="162.10" y="99">0</text><text x="186.20" y="99">50</text><text x="210.30" y="99">100</text><text x="234.40" y="99">150</text><text x="258.50" y="99">200</text><text x="282.60" y="99">250</text><text x="306.70" y="99">300</text><text x="330.80" y="99">350</text><text x="354.90" y="99">400</text><text x="379.00" y="99">450</text><text x="403.10" y="99">500</text><text x="427.20" y="99">550</text><text transform="translate(141 404.60) rotate(-90)">0</text><text transform="translate(141 380.48) rotate(-90)">50</text><text transform="translate(141 356.35) rotate(-90)">100</text><text transform="translate(141 332.23) rotate(-90)">150</text><text transform="translate(141 308.10) rotate(-90)">200</text><text transform="translate(141 283.98) rotate(-90)">250</text><text transform="translate(141 259.85) rotate(-90)">300</text><text transform="translate(141 235.73) rotate(-90)">350</text><text transform="translate(141 211.60) rotate(-90)">400</text><text transform="translate(141 187.48) rotate(-90)">450</text><text transform="translate(141 163.35) rotate(-90)">500</text><text transform="translate(141 139.23) rotate(-90)">550</text><text transform="translate(141 115.10) rotate(-90)">600</text></g>
</svg>
<!-- scrollbars -->
<div class="a" style="left:441px;top:93.5px;width:9px;height:322px;background:#ececec"></div>
<div class="a" style="left:442.6px;top:104px;width:5.6px;height:231px;background:#a9a9a9;border-radius:0 0 2.8px 2.8px"></div>
<svg class="a" style="left:442px;top:409px" width="7" height="6" viewBox="442 409 7 6"><path d="M443.6 411 L445.2 412.6 L446.8 411" fill="none" stroke="#666" stroke-width=".7"/></svg>
<div class="a" style="left:135px;top:415.5px;width:315px;height:9.5px;background:#ececec"></div>
<div class="a" style="left:229px;top:417.8px;width:165px;height:4.8px;background:#a9a9a9;border-radius:2px"></div>
<svg class="a" style="left:146px;top:416px" width="296" height="9" viewBox="146 416 296 9"><path d="M150.3 418.8 L148.8 420.3 L150.3 421.8" fill="none" stroke="#666" stroke-width=".7"/><path d="M436.3 418.8 L437.8 420.3 L436.3 421.8" fill="none" stroke="#666" stroke-width=".7"/></svg>
<!-- status bar -->
<div class="a" style="left:135px;top:425px;width:315px;height:12px;background:#f5f6f6"></div>
<div class="a" style="left:148px;top:426px;width:51px;height:11px;background:#fff;border:1px solid #d0d0d0"></div>
<div class="t mono" style="left:150.5px;top:428.6px;font-size:5.6px;color:#444">1:16,000</div>
<svg class="a" style="left:130px;top:424px" width="320" height="14" viewBox="130 424 320 14">
 <path d="M194 430.5 L195.3 431.8 L196.6 430.5Z" fill="#444"/>
 <path d="M202 427.5V435.5 M231.5 427.5V435.5 M246.3 427.5V435.5 M413 427.5V435.5 M427.8 427.5V435.5" stroke="#c8c8c8" stroke-width=".6"/>
 <path d="M222.5 430.5 L223.8 431.8 L225.1 430.5Z" fill="#444"/>
 <rect x="233" y="425.6" width="11" height="10.6" fill="#aad9f8"/>
 <path d="M235 427.5 H239.5 V432.5 H235Z M235 430 H239.5 M237.3 427.5V432.5" fill="none" stroke="#3a8ad6" stroke-width=".55"/><path d="M240 431.5V435 M238.3 433.3H241.7" stroke="#3a8ad6" stroke-width=".6"/>
 <rect x="416.8" y="427.5" width="2" height="7" fill="#444"/><rect x="420.3" y="427.5" width="2" height="7" fill="#444"/>
 <path d="M431 430.8 A3.5 3.5 0 0 1 437.6 429.8 M437.6 427.5V430.2H435 M438 431.8 A3.5 3.5 0 0 1 431.4 432.8 M431.4 435V432.4H434" fill="none" stroke="#2d85d8" stroke-width="1.1"/>
</svg>
<div class="t mono" style="left:208px;top:428.6px;font-size:5.6px;color:#444">25%</div>
<div class="t mono" style="left:293px;top:428.6px;font-size:5.6px;color:#444">548.641 , 539.328</div>
<!-- page -->
<div class="a" style="left:158.4px;top:118.4px;width:203.4px;height:287px;background:#fff;border:1px solid #a8a8a8;border-right-color:#8a8a8a;border-bottom-color:#8a8a8a;box-shadow:.6px .6px .8px rgba(0,0,0,.25)"></div>
<svg class="a" style="left:158px;top:118px" width="206" height="288" viewBox="158 118 206 288">
 <rect x="163.8" y="123.8" width="192.9" height="276.6" fill="none" stroke="#3a3a3a" stroke-width="1.1"/>
 <path d="M163.8 152.4 H356.7" stroke="#555" stroke-width="1"/>
 <path d="M163.8 352.5 H356.7 M163.8 388.6 H356.7 M175 352.5 V388.6" stroke="#808080" stroke-width=".75"/>
</svg>

<svg class="a" style="left:158px;top:118px" width="206" height="288" viewBox="158 118 206 288">
 <defs><clipPath id="mc"><rect x="164.4" y="153" width="191.8" height="199"/></clipPath></defs>
 <g clip-path="url(#mc)" fill="none" stroke-linejoin="round" stroke-linecap="round">
  <path d="M164 211.8 L178.5 213.6 L193 217.7 M193 217.7 C198 213 206 207 214.8 205.4 C220 203 226 200.8 229.3 200.3 L239.3 197.6 M193 217.7 L187.6 227.2 L182.1 241.7 L181.2 244.4 L176.7 242.6 M239.3 197.6 L234.8 189 M241.4 198.1 L246.9 201.7 L261.4 205.4 L269.6 211.7 L273.3 216.7 M285 167.2 L290.4 173.6 L297.7 185.4 L302.2 191.7 M299.5 158.2 L302.2 164.5 L308.6 165.4 L316 160.9 L323.8 157 M220.4 288.6 L222.2 287.7 L231.3 279.5 L248.5 283.1 M182 331 L190 320 L201 309 M203.2 278.6 L212.2 282.2 M202.3 294.9 L209.5 294.9 M206 318 L215 314 M207 328 L222 320 M217 326 L223 335 M246 290 L262 295 M240 310 L252 314 M236 320 L250 326 M247.6 284 L265.8 288 M251 273 L266 277 M244 298.6 L259 302 M308.8 247 L314.4 248.1 L317.8 245.9 L337 250 M321 230 L321 240 M328 230 L328 241 M337 230 L340.5 241 M347 230 L344 242.5 M328.5 165 L325.6 187 L328.8 209 L333 226 L335.2 241" stroke="#b0b0b0" stroke-width=".9"/>
  <path d="M258 234 L273.6 219 L286.3 209 L306.3 191.8 L320.8 180.9 M266 236 L273.6 229.9 L291.7 213.6 L309.9 200 L324 190 M286.3 229.9 L304.4 217.2 L322.6 206.3 M262 224 L268 221 L273.6 229.9 L275 239 M279 212 L284 222 L286.3 229.9 L287 238 M284.5 206.3 L293.6 220.8 L295.4 229.9 L295.4 238 M295.4 197.2 L304.4 210 L309.9 224.4 L310 238 M304.4 190 L315.3 204.5 L319 224.4 M312 185 L320 196 M330 168 L351 186 M327 178 L351 198 M328 190 L351 210 M329 202 L351 221 M331 214 L351 230 M333 200 L345 165 M337 214 L351 176 M341 226 L351 198 M330 186 L339 163 M345 236 L351 220 M330.5 226 L351 222 M323 163.6 L320.8 176.5 L319.7 198 L323 219.7 L327.2 250" stroke="#c2c2c2" stroke-width="2.2"/>
  <path d="M241.3 198.1 L285 167.2 L299.5 158.2 L312.2 153.6 L318 152.4 M241.1 199 C230 205 221 212 218.4 218.1 C215 226 214 236 213 243.5 L211.2 249 L207.7 264.1 L203.2 278.6 L202.3 294.9 L204.1 318.5 L206 322 L210 350 L210.5 353 M216.8 266.8 L212.2 282.2 L209.5 294.9 L211 306 C213 314 218 320 222 320 L231 327 M164 325.5 L182 331 C190 336 196 340 201 342 L208 343 L216 341 L231 327 M253.1 269.5 L247.6 284 L244 298.6 L240.4 309.4 L234 323 L231 327 M269.4 267.7 L265.8 276.8 L262.2 289.5 L256.7 305.8 L252 316 L245 335 L244 340 M319 241.3 C319 250 316 260 312 266.3 C307 272 300 276 298.5 277.6 C292 281 288 283 286 284.4 C280 292 276 300 273.6 304.8 C268 312 262 322 257 330 L253 342 L250 353 M216.8 266.8 L231.3 268.6 L253.1 273.1 L267.6 272.2 M231 327 L246 336 L253 342 L270 352.7 M260 266.3 L269 273 L286 284.4 L295 292.4 M258 237 L270 235.4 L293.6 229 L319 224.5 L350 217.2 L357 215 M291.8 238 L313.6 238 L319 240.8 M326 165 L323 187 L326.2 209 L330.5 226 L332.6 241" stroke="#bebebe" stroke-width="2.5"/>
  <path d="M258 234 L273.6 219 L286.3 209 L306.3 191.8 L320.8 180.9 M266 236 L273.6 229.9 L291.7 213.6 L309.9 200 L324 190 M286.3 229.9 L304.4 217.2 L322.6 206.3 M262 224 L268 221 L273.6 229.9 L275 239 M279 212 L284 222 L286.3 229.9 L287 238 M284.5 206.3 L293.6 220.8 L295.4 229.9 L295.4 238 M295.4 197.2 L304.4 210 L309.9 224.4 L310 238 M304.4 190 L315.3 204.5 L319 224.4 M312 185 L320 196 M330 168 L351 186 M327 178 L351 198 M328 190 L351 210 M329 202 L351 221 M331 214 L351 230 M333 200 L345 165 M337 214 L351 176 M341 226 L351 198 M330 186 L339 163 M345 236 L351 220 M330.5 226 L351 222 M323 163.6 L320.8 176.5 L319.7 198 L323 219.7 L327.2 250" stroke="#f2f2f2" stroke-width=".7"/>
  <path d="M241.3 198.1 L285 167.2 L299.5 158.2 L312.2 153.6 L318 152.4 M241.1 199 C230 205 221 212 218.4 218.1 C215 226 214 236 213 243.5 L211.2 249 L207.7 264.1 L203.2 278.6 L202.3 294.9 L204.1 318.5 L206 322 L210 350 L210.5 353 M216.8 266.8 L212.2 282.2 L209.5 294.9 L211 306 C213 314 218 320 222 320 L231 327 M164 325.5 L182 331 C190 336 196 340 201 342 L208 343 L216 341 L231 327 M253.1 269.5 L247.6 284 L244 298.6 L240.4 309.4 L234 323 L231 327 M269.4 267.7 L265.8 276.8 L262.2 289.5 L256.7 305.8 L252 316 L245 335 L244 340 M319 241.3 C319 250 316 260 312 266.3 C307 272 300 276 298.5 277.6 C292 281 288 283 286 284.4 C280 292 276 300 273.6 304.8 C268 312 262 322 257 330 L253 342 L250 353 M216.8 266.8 L231.3 268.6 L253.1 273.1 L267.6 272.2 M231 327 L246 336 L253 342 L270 352.7 M260 266.3 L269 273 L286 284.4 L295 292.4 M258 237 L270 235.4 L293.6 229 L319 224.5 L350 217.2 L357 215 M291.8 238 L313.6 238 L319 240.8 M326 165 L323 187 L326.2 209 L330.5 226 L332.6 241" stroke="#f0f0f0" stroke-width=".9"/>
 </g>
</svg>
<!-- ===== ANNOTATION ===== -->
<svg class="a" style="left:220px;top:135px" width="140" height="120" viewBox="220 135 140 120">
 <defs><filter id="sh" x="-20%" y="-20%" width="140%" height="140%"><feGaussianBlur in="SourceAlpha" stdDeviation=".9"/><feOffset dx=".9" dy="1.1" result="b"/><feComponentTransfer><feFuncA type="linear" slope=".6"/></feComponentTransfer><feMerge><feMergeNode/><feMergeNode in="SourceGraphic"/></feMerge></filter></defs>
 <g filter="url(#sh)">
  <path d="M231.6 242.5 L336.4 154.4 L333.6 151.6 L350 147.1 L342.3 161.2 L340 158.5 L232.4 243.5 Z" fill="#ff0000" stroke="#fff" stroke-width="1.2" stroke-linejoin="round"/>
 </g>
</svg>
<div class="t" style="left:175px;top:248.8px;font-size:17.2px;font-weight:bold;-webkit-text-stroke:0;color:#ff0a0a;letter-spacing:.95px;transform:scaleX(.9);transform-origin:0 0;text-shadow:1.3px 0 0 #fff,-1.3px 0 0 #fff,0 1.3px 0 #fff,0 -1.3px 0 #fff,1px 1px 0 #fff,-1px -1px 0 #fff,1px -1px 0 #fff,-1px 1px 0 #fff,1.5px 1.8px 2px rgba(0,0,0,.5)">创建位置书签</div>

<!-- ===== RIGHT PANE ===== -->
<div class="a" style="left:453.5px;top:81.5px;width:143.5px;height:346.5px;background:#f6f7f7"></div>
<div class="a" style="left:450px;top:93px;width:3.5px;height:348px;background:#e6e6e6"></div>
<svg class="a" style="left:545px;top:82px" width="55" height="45" viewBox="545 82 55 45">
 <path d="M572.2 87.6 L573.7 89.1 L575.2 87.6" fill="none" stroke="#555" stroke-width=".8"/>
 <path d="M581 86 H584 M581.5 86 V90 H583.5 V86 M580.5 90 H584.5 M582.5 90 V92.3" fill="none" stroke="#555" stroke-width=".8"/>
 <path d="M589.5 86.5 L593.5 90.8 M593.5 86.5 L589.5 90.8" stroke="#555" stroke-width=".9"/>
 <path d="M586 98.8 H593.5 M586 101.5 H593.5 M586 104.2 H593.5" stroke="#555" stroke-width="1.2"/>
</svg>
<div class="a" style="left:545px;top:111px;width:50px;height:12px;background:#fff;border:1px solid #d9d9d9;border-left:none"></div>
<svg class="a" style="left:572px;top:112px" width="22" height="10" viewBox="572 112 22 10"><circle cx="579.8" cy="116.3" r="1.8" fill="none" stroke="#444" stroke-width=".8"/><path d="M578.6 117.5 L576.8 119.6" stroke="#444" stroke-width="1"/><path d="M588 116 L589.4 117.4 L590.8 116" fill="none" stroke="#666" stroke-width=".7"/></svg>
<!-- scrollbar -->
<div class="a" style="left:586.5px;top:125px;width:8.5px;height:295px;background:#ebebeb"></div>
<div class="a" style="left:588.7px;top:306px;width:4.3px;height:103px;background:#aeaeae;border-radius:2px"></div>
<svg class="a" style="left:586px;top:125px" width="10" height="296" viewBox="586 125 10 296"><path d="M589.5 131.2 L591 129.7 L592.5 131.2" fill="none" stroke="#666" stroke-width=".7"/><path d="M589.5 414.8 L591 416.3 L592.5 414.8" fill="none" stroke="#666" stroke-width=".7"/></svg>
<!-- selected row -->
<div class="a" style="left:490px;top:334.2px;width:96px;height:11.2px;background:#c9c9c9;border:1px solid #bdbdbd"></div>
<!-- icons -->
<svg class="a" style="left:455px;top:125px" width="132" height="295" viewBox="455 125 132 295">
 <g fill="none" stroke="#777" stroke-width=".6">
  <path d="M477.4 215.3 L479.3 217 L477.4 218.7"/><path d="M477.4 227.8 L479.3 229.5 L477.4 231.2"/><path d="M477.4 240.2 L479.3 241.9 L477.4 243.6"/>
  <path d="M477.4 252.4 L479.3 254.1 L477.4 255.8"/><path d="M477.4 264.8 L479.3 266.5 L477.4 268.2"/>
  <path d="M477.4 350 L479.3 351.7 L477.4 353.4"/><path d="M477.4 362 L479.3 363.7 L477.4 365.4"/>
  <path d="M460.8 410.8 L462.7 412.5 L460.8 414.2"/>
 </g>
 <path d="M476.5 280.2 L479 277.7 V280.2Z" fill="#444"/>
 <!-- folder -->
 <path d="M483.4 214 H487 L488 215 H491.7 V220 H483.4Z" fill="#e3c15e"/>
 <!-- db -->
 <g fill="#fafafa" stroke="#888" stroke-width=".6">
  <path d="M484 227 V232 A3 1.2 0 0 0 490 232 V227"/><ellipse cx="487" cy="227" rx="3" ry="1.2"/>
  <path d="M484 239.4 V244.4 A3 1.2 0 0 0 490 244.4 V239.4"/><ellipse cx="487" cy="239.4" rx="3" ry="1.2"/>
 </g>
 <!-- cad -->
 <g>
  <rect x="483" y="250.6" width="5.5" height="4.5" fill="#64b0e8"/><rect x="485.5" y="252.6" width="6" height="5" fill="#bfe0f7" stroke="#4a9ede" stroke-width=".5"/><path d="M486.5 254 L490 256.5" stroke="#333" stroke-width=".5"/>
  <rect x="483" y="263" width="5.5" height="4.5" fill="#64b0e8"/><rect x="485.5" y="265" width="6" height="5" fill="#bfe0f7" stroke="#4a9ede" stroke-width=".5"/><path d="M486.5 266.4 L490 268.9" stroke="#333" stroke-width=".5"/>
  <rect x="483" y="275.1" width="5.5" height="4.5" fill="#64b0e8"/><rect x="485.5" y="277.1" width="6" height="5" fill="#bfe0f7" stroke="#4a9ede" stroke-width=".5"/><path d="M486.5 278.5 L490 281" stroke="#333" stroke-width=".5"/>
 </g>
 <!-- feature class icons -->
 <g fill="#d8ecfa" stroke="#62a8e0" stroke-width=".7">
  <rect x="492" y="287.2" width="7.6" height="6.4" rx=".8"/><rect x="492" y="299.5" width="7.6" height="6.4" rx=".8"/>
  <rect x="492" y="311.8" width="7.6" height="6.4" rx=".8"/><rect x="492" y="324.3" width="7.6" height="6.4" rx=".8"/>
  <rect x="492" y="336.2" width="7.6" height="6.4" rx=".8"/>
 </g>
 <path d="M494 289.4h1.2M496.5 291.5h1.2M494 314h1.2M496.5 316h1.2" stroke="#5a9ad6" stroke-width=".8"/>
 <path d="M493.8 301.5 L495.8 300.6 L497.8 301.5 V304 L495.8 305 L493.8 304Z" fill="#555"/>
 <rect x="493.8" y="325.8" width="4" height="3.6" fill="#999"/>
 <path d="M493.7 340 L495.3 338.3 L496.6 340.2 L498 338.5" fill="none" stroke="#333" stroke-width=".6"/>
 <!-- png icons -->
 <rect x="483.8" y="348.8" width="8.2" height="6.6" rx="1.2" fill="#58a3dd"/><path d="M485.2 352.8 L487 351 L488.5 352.5 L490.6 350.6" fill="none" stroke="#dff0fb" stroke-width=".7"/>
 <rect x="483.8" y="360.6" width="8.2" height="6.6" rx="1.2" fill="#58a3dd"/><path d="M485.2 364.6 L487 362.8 L488.5 364.3 L490.6 362.4" fill="none" stroke="#dff0fb" stroke-width=".7"/>
 <!-- txt -->
 <g fill="#dcebf7" stroke="#8aa6be" stroke-width=".6">
  <path d="M484.7 372.5 H489 L491 374.5 V380.3 H484.7Z"/>
  <path d="M484.7 384.9 H489 L491 386.9 V392.7 H484.7Z"/>
  <path d="M484.7 396.6 H489 L491 398.6 V404.4 H484.7Z"/>
 </g>
 <!-- locator -->
 <path d="M467 409.5 H471 L472 410.5 H475 V416.2 H467Z" fill="#f0c452"/><rect x="469.3" y="412" width="3.5" height="3.5" fill="#d9534f"/><rect x="470" y="413.7" width="2.5" height="2" fill="#3a8ad6"/>
</svg>
<!-- tree text -->
<div class="t" style="left:545px;top:128px;font-size:6.3px;color:#555">乡村庄规划</div>
<div class="t" style="left:546px;top:140.2px;font-size:6.3px;color:#555">属性结构</div>
<div class="t" style="left:545px;top:152.6px;font-size:6.3px;color:#555">幢数据</div>
<div class="t" style="left:545px;top:164.8px;font-size:6.3px;color:#555">理图</div>
<div class="t" style="left:545px;top:177px;font-size:6.3px;color:#555">机拍摄</div>
<div class="t" style="left:545px;top:189.2px;font-size:6.3px;color:#555">关资料</div>
<div class="t" style="left:496px;top:213.8px;font-size:6.3px;color:#555">资溪县资源资源数据</div>
<div class="t" style="left:496px;top:226.3px;font-size:6.3px;color:#555">村庄规划数据库<span class="mono" style="font-size:5.6px">.gdb</span></div>
<div class="t" style="left:496px;top:238.7px;font-size:6.3px;color:#555">永丰县三线<span class="mono" style="font-size:5.6px">.gdb</span></div>
<div class="t" style="left:496px;top:250.9px;font-size:6.3px;color:#555">河东河西<span class="mono" style="font-size:5.6px">.dwg</span></div>
<div class="t" style="left:496px;top:263.3px;font-size:6.3px;color:#555">万安县河东河西片带高程<span class="mono" style="font-size:5.6px">.dwg</span></div>
<div class="t" style="left:496px;top:275.4px;font-size:6.3px;color:#555">用地布局规划图<span class="mono" style="font-size:5.6px">.dwg</span></div>
<div class="t mono" style="left:503.6px;top:287.6px;font-size:5.6px;color:#555">Annotation</div>
<div class="t mono" style="left:503.6px;top:299.9px;font-size:5.6px;color:#555">MultiPatch</div>
<div class="t mono" style="left:503.6px;top:312.2px;font-size:5.6px;color:#555">Point</div>
<div class="t mono" style="left:503.6px;top:324.7px;font-size:5.6px;color:#555">Polygon</div>
<div class="t mono" style="left:503.6px;top:336.6px;font-size:5.6px;color:#555">Polyline</div>
<div class="t" style="left:496px;top:348.6px;font-size:6.3px;color:#555">预告<span class="mono" style="font-size:5.6px">(1).png</span></div>
<div class="t" style="left:496px;top:360.6px;font-size:6.3px;color:#555">预告<span class="mono" style="font-size:5.6px">.png</span></div>
<div class="t" style="left:496px;top:373px;font-size:6.3px;color:#555"><span class="mono" style="font-size:5.6px">./7-1</span>项目勘测定界界址点坐标<span class="mono" style="font-size:5.6px">.t</span></div>
<div class="t mono" style="left:496px;top:386px;font-size:5.6px;color:#555">YDFW3.txt</div>
<div class="t" style="left:496px;top:397.4px;font-size:6.3px;color:#555">永丰县佐龙乡等土地整理项目<span class="mono" style="font-size:5.6px">.tx</span></div>
<div class="t" style="left:480px;top:409.4px;font-size:6.3px;color:#555">定位器</div>
<!-- h scroll -->
<div class="a" style="left:455px;top:420px;width:131px;height:8px;background:#ececec"></div>
<div class="a" style="left:465px;top:422.3px;width:105px;height:3.4px;background:#a9a9a9;border-radius:1.7px"></div>
<svg class="a" style="left:455px;top:419px" width="132" height="10" viewBox="455 419 132 10"><path d="M462 422.3 L460.7 423.8 L462 425.3" fill="none" stroke="#777" stroke-width=".6"/><path d="M581.2 422.3 L582.5 423.8 L581.2 425.3" fill="none" stroke="#777" stroke-width=".6"/></svg>
<!-- bottom tabs -->
<div class="a" style="left:453.5px;top:428.5px;width:143.5px;height:12.5px;background:#f0f1f1"></div>
<div class="a" style="left:455px;top:428.5px;width:16px;height:12.5px;background:#fbfbfb"></div>
<div class="t" style="left:456px;top:429.6px;font-size:6.2px;color:#2a7fd4">目<span style="display:inline-block;width:2.8px;height:.8px;background:currentColor;vertical-align:2.2px;margin-left:.8px"></span><span style="display:inline-block;width:2.8px;height:.8px;background:currentColor;vertical-align:2.2px;margin-left:.9px"></span></div>
<div class="t" style="left:476px;top:429.6px;font-size:6.2px;color:#555">历<span style="display:inline-block;width:2.8px;height:.8px;background:currentColor;vertical-align:2.2px;margin-left:.8px"></span><span style="display:inline-block;width:2.8px;height:.8px;background:currentColor;vertical-align:2.2px;margin-left:.9px"></span></div>
<div class="t" style="left:494px;top:429.6px;font-size:6.2px;color:#555">定<span style="display:inline-block;width:2.8px;height:.8px;background:currentColor;vertical-align:2.2px;margin-left:.8px"></span><span style="display:inline-block;width:2.8px;height:.8px;background:currentColor;vertical-align:2.2px;margin-left:.9px"></span></div>
<div class="t" style="left:511.5px;top:429.6px;font-size:6.2px;color:#555">导<span style="display:inline-block;width:2.8px;height:.8px;background:currentColor;vertical-align:2.2px;margin-left:.8px"></span><span style="display:inline-block;width:2.8px;height:.8px;background:currentColor;vertical-align:2.2px;margin-left:.9px"></span></div>
<div class="t" style="left:529.5px;top:429.6px;font-size:6.2px;color:#555">元<span style="display:inline-block;width:2.8px;height:.8px;background:currentColor;vertical-align:2.2px;margin-left:.8px"></span><span style="display:inline-block;width:2.8px;height:.8px;background:currentColor;vertical-align:2.2px;margin-left:.9px"></span></div>
<div class="t" style="left:547.5px;top:429.6px;font-size:6.2px;color:#555">易<span style="display:inline-block;width:2.8px;height:.8px;background:currentColor;vertical-align:2.2px;margin-left:.8px"></span><span style="display:inline-block;width:2.8px;height:.8px;background:currentColor;vertical-align:2.2px;margin-left:.9px"></span></div>
<div class="t" style="left:565px;top:429.6px;font-size:6.2px;color:#555">傳<span style="display:inline-block;width:2.8px;height:.8px;background:currentColor;vertical-align:2.2px;margin-left:.8px"></span><span style="display:inline-block;width:2.8px;height:.8px;background:currentColor;vertical-align:2.2px;margin-left:.9px"></span></div>
<div class="t" style="left:582.5px;top:429.6px;font-size:6.2px;color:#555">會<span style="display:inline-block;width:2.8px;height:.8px;background:currentColor;vertical-align:2.2px;margin-left:.8px"></span><span style="display:inline-block;width:2.8px;height:.8px;background:currentColor;vertical-align:2.2px;margin-left:.9px"></span></div>

<!-- ===== DROPDOWN ===== -->
<div class="a" style="left:351.5px;top:67.5px;width:192.5px;height:145.5px;background:#fff;border:1px solid #d4d4d4;box-shadow:0 0 2px rgba(0,0,0,.18),1.5px 1.5px 2.5px rgba(0,0,0,.2)"></div>
<div class="t" style="left:513.6px;top:71px;font-size:6.3px;color:#666">全部</div>
<svg class="a" style="left:525px;top:72px" width="7" height="6" viewBox="525 72 7 6"><path d="M527 74.3 L528.5 75.8 L530 74.3" fill="none" stroke="#666" stroke-width=".7"/></svg>
<div class="a" style="left:352.5px;top:81.6px;width:190.5px;height:1px;background:#e3e3e3"></div>
<div class="t" style="left:360.8px;top:86.5px;font-size:6.6px;color:#222;font-weight:bold;-webkit-text-stroke:0">谷歌影像图和天地图注记</div><div class="t" style="left:432.6px;top:87.9px;font-size:5.4px;color:#2a2a2a;font-weight:bold;-webkit-text-stroke:0">_BM</div><div class="t" style="left:446.5px;top:86.3px;font-size:6.85px;color:#222;font-weight:bold;-webkit-text-stroke:0">书签</div>
<svg class="a" style="left:370px;top:97px" width="30" height="30" viewBox="370 97 30 30">
 <path d="M373.2 106 L373.2 123.4 L397 123.4 L397 106" fill="#5fa8e0"/>
 <path d="M374.8 106 Q380 102 385 104.5 Q390 102 395.5 106 V121.5 Q390 118.5 385 121 Q380 118.5 374.8 121.5 Z" fill="#f7f7f7" stroke="#7a7a7a" stroke-width=".8"/>
 <path d="M385 104.5 V121" stroke="#9a9a9a" stroke-width=".7"/>
 <path d="M388.5 99 H392.5 V114.4 L390.5 112.5 L388.5 114.4Z" fill="#4aa0e2"/>
</svg>
<div class="t mono" style="left:368px;top:127.9px;font-size:5.4px;color:#707070">Bookmark 1</div>
<!-- menu -->
<div class="a" style="left:352.5px;top:140.4px;width:191px;height:13.5px;background:#c6e5f8"></div>
<svg class="a" style="left:352px;top:140px" width="14" height="66" viewBox="352 140 14 66">
 <rect x="355.5" y="143.5" width="7" height="6.5" fill="#fff" stroke="#5fa0d8" stroke-width=".7"/><path d="M356.5 144.5 H361.5" stroke="#5fa0d8" stroke-width=".6"/><rect x="357" y="146" width="4" height="3.3" fill="#6aa8e0"/><circle cx="356.5" cy="143" r="1.5" fill="#f2c744"/>
 <rect x="355.3" y="156.8" width="7.2" height="6.8" fill="#fff" stroke="#3a7fc6" stroke-width=".9"/><rect x="356.5" y="158.5" width="4.8" height="3.8" fill="#b8dbf5"/><path d="M358 159.3 V161.8 M359.8 159.3 V161.8" stroke="#3a7fc6" stroke-width=".5"/>
 <rect x="355.5" y="170.5" width="7" height="6.5" fill="#fff" stroke="#d6d6d6" stroke-width=".7"/><rect x="357" y="172.8" width="4" height="3.3" fill="#e3e3e3"/>
 <rect x="355.5" y="184" width="7" height="6.5" fill="#fff" stroke="#5fa0d8" stroke-width=".7"/><rect x="357" y="186.3" width="4" height="3.3" fill="#6aa8e0"/><path d="M357 181.5 V185.5 M355.6 184.2 L357 185.7 L358.4 184.2" fill="none" stroke="#e8902a" stroke-width=".9"/>
</svg>
<div class="t" style="left:368.7px;top:143.7px;font-size:6.3px;color:#222">新建书签<span style="letter-spacing:1.2px">...</span></div>
<div class="t" style="left:368.7px;top:157.2px;font-size:6.3px;color:#222">管理书签</div>
<div class="t" style="left:368.7px;top:170.7px;font-size:6.3px;color:#bdbdbd">导出书签<span style="letter-spacing:1.2px">...</span></div>
<div class="t" style="left:368.7px;top:184.2px;font-size:6.3px;color:#222">导入书签<span style="letter-spacing:1.2px">...</span></div>
<div class="t" style="left:368.7px;top:197px;font-size:6.3px;color:#222">书签选项</div>
<svg class="a" style="left:530px;top:193px" width="14" height="20" viewBox="530 193 14 20"><path d="M535.2 197.5 L537.5 200 L535.2 202.5" fill="none" stroke="#555" stroke-width=".7"/><path d="M540.5 210.5 h.8 M542 210.5 h.8 M542 209 h.8" stroke="#aaa" stroke-width=".8"/></svg>
<!-- tooltip -->
<div class="a" style="left:419.3px;top:152.8px;width:107.7px;height:59.4px;background:#f7f7f7;border:1px solid #dcdcdc;box-shadow:1px 1px 2px rgba(0,0,0,.25)"></div>
<div class="t" style="left:424px;top:158.3px;font-size:5.6px;color:#222;font-weight:bold;-webkit-text-stroke:0">新建书签</div>
<div class="t" style="left:428px;top:169.2px;font-size:6.2px;color:#333">书签存储于捕获到它们的地图或场</div>
<div class="t" style="left:428px;top:178.6px;font-size:6.2px;color:#333">景，并可用于任何打开的视图。</div>
<div class="t" style="left:428px;top:193.2px;font-size:6.3px;color:#333;-webkit-text-stroke:0">ID:</div>
<div class="t" style="left:427.5px;top:201.6px;font-size:6.6px;color:#2a2a2a;-webkit-text-stroke:0">esri_mapping_createBookmark</div>

</body></html>
